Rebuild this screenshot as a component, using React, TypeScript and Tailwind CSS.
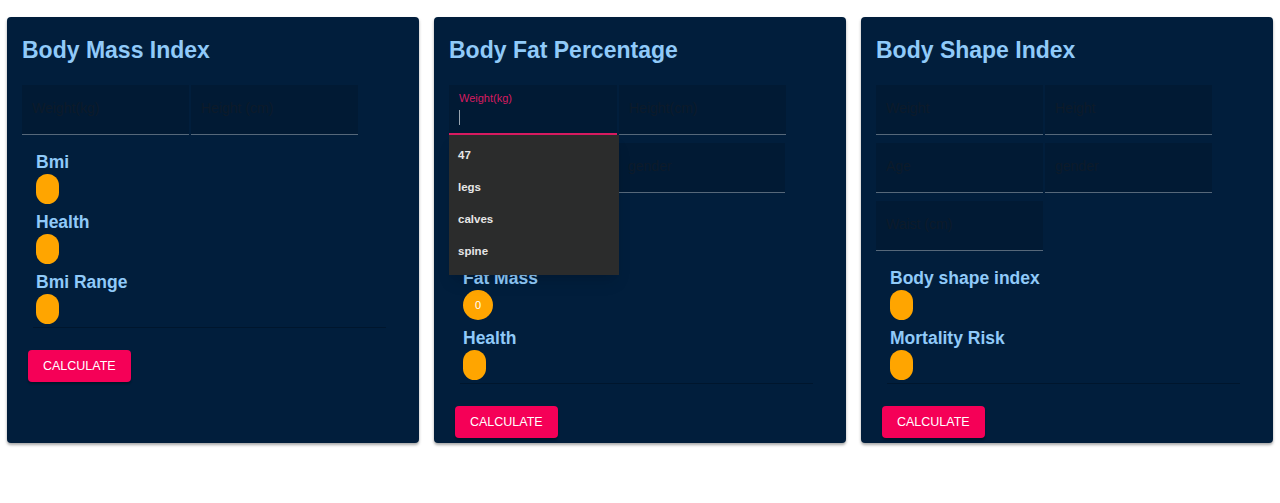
import React from "react";

const sans = { fontFamily: '"Liberation Sans", Arial, sans-serif' };

type Field = { label: string; focused?: boolean; options?: string[] };
type Result = { label: string; value?: string };

interface CardProps {
  title: string;
  rows: Field[][];
  results: Result[];
}

function Input({ field }: { field: Field }) {
  if (field.focused) {
    return (
      <div className="relative w-[168px] h-[50px] bg-[#011a34] border-b-2 border-[#d81b60] px-[10px]">
        <div className="pt-[8px] text-[11px] leading-none text-[#d81b60]">{field.label}</div>
        <div className="mt-[6px] w-px h-[15px] bg-[#9aa5b0]" />
        {field.options && (
          <ul className="absolute left-0 top-full mt-[2px] w-[170px] z-10 bg-[#2b2c2c] pt-[5px] pb-[7px] shadow-lg">
            {field.options.map((opt) => (
              <li key={opt} className="h-[32px] flex items-center px-[9px] text-[11.5px] font-bold text-[#e6e6e6]">
                {opt}
              </li>
            ))}
          </ul>
        )}
      </div>
    );
  }
  return (
    <input
      placeholder={field.label}
      className="w-[167px] h-[50px] bg-[#011a34] border-b border-[#56687a] px-[10px] pb-[3px] text-[14px] outline-none placeholder:text-[#0d1b2a]"
      style={sans}
    />
  );
}

function Chip({ value }: { value?: string }) {
  return value ? (
    <span className="w-[30px] h-[30px] rounded-full bg-[#ffa500] text-white text-[11px] flex items-center justify-center">
      {value}
    </span>
  ) : (
    <span className="block w-[23px] h-[30px] rounded-full bg-[#ffa500]" />
  );
}

function CalcCard({ title, rows, results }: CardProps) {
  return (
    <div className="h-[426px] bg-[#011e3c] rounded-[4px] shadow-[0_2px_3px_rgba(0,0,0,0.35)] px-[15px] pt-[15px]" style={sans}>
      <h2 className="text-[23px] leading-[36px] font-bold text-[#90caf9]" style={{ fontFamily: '"Comic Sans MS", "Liberation Sans", Arial, sans-serif' }}>
        {title}
      </h2>

      {/* Inputs */}
      <div className="mt-[17px] flex flex-col gap-[8px]">
        {rows.map((row, i) => (
          <div key={i} className="flex gap-[2px]">
            {row.map((f) => (
              <Input key={f.label} field={f} />
            ))}
          </div>
        ))}
      </div>

      {/* Results */}
      <div className="mt-[15px] ml-[11px] mr-[18px] pl-[3px] pb-[3px] border-b border-[#00162d] flex flex-col gap-[6px]">
        {results.map((r) => (
          <div key={r.label}>
            <p className="text-[17.5px] leading-[24px] font-bold text-[#90caf9]">{r.label}</p>
            <Chip value={r.value} />
          </div>
        ))}
      </div>

      <button className="mt-[22px] ml-[6px] h-[32px] px-[15px] rounded-[4px] bg-[#f50057] text-white text-[12.5px] shadow-[0_2px_2px_rgba(0,0,0,0.3)]">
        CALCULATE
      </button>
    </div>
  );
}

export default function App() {
  return (
    <div className="w-[1280px] h-[503px] bg-white pt-[17px] px-[7px] grid grid-cols-3 gap-[15px] items-start">
      <CalcCard
        title="Body Mass Index"
        rows={[[{ label: "Weight(kg)" }, { label: "Height (cm)" }]]}
        results={[{ label: "Bmi" }, { label: "Health" }, { label: "Bmi Range" }]}
      />
      <CalcCard
        title="Body Fat Percentage"
        rows={[
          [{ label: "Weight(kg)", focused: true, options: ["47", "legs", "calves", "spine"] }, { label: "Height(cm)" }],
          [{ label: "Age" }, { label: "gender" }],
          [{ label: "Waist (cm)" }],
        ]}
        results={[{ label: "Fat Mass", value: "0" }, { label: "Health" }]}
      />
      <CalcCard
        title="Body Shape Index"
        rows={[
          [{ label: "Weight" }, { label: "Height" }],
          [{ label: "Age" }, { label: "gender" }],
          [{ label: "Waist (cm)" }],
        ]}
        results={[{ label: "Body shape index" }, { label: "Mortality Risk" }]}
      />
    </div>
  );
}
